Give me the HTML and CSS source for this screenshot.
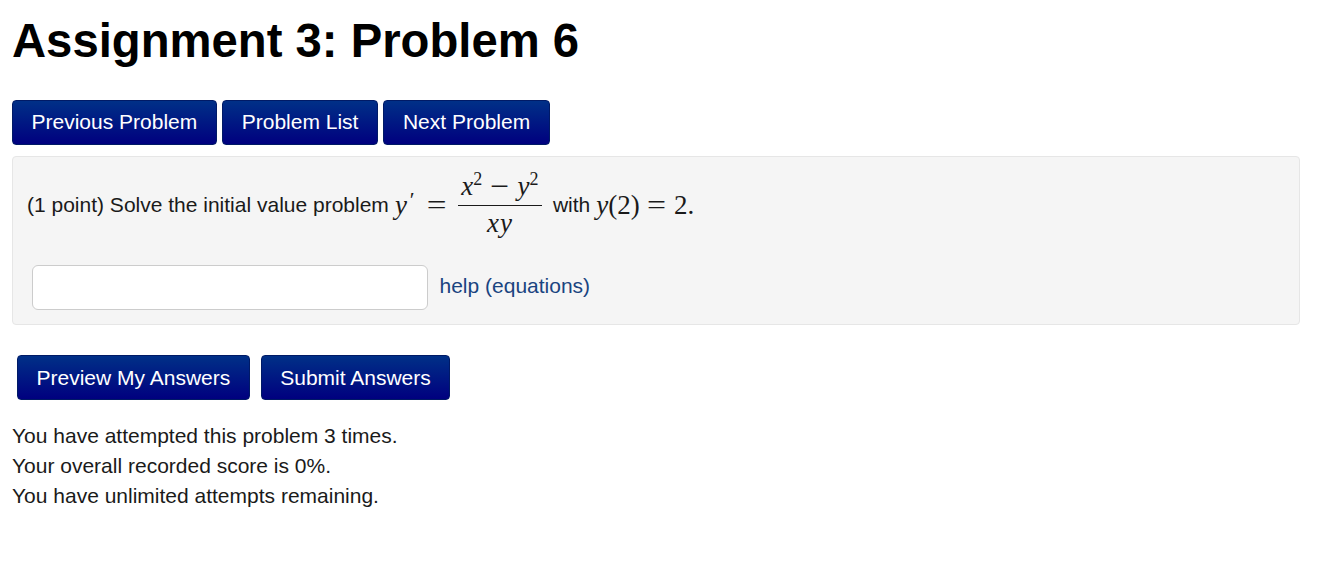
FILE: index.html
```html
<!DOCTYPE html>
<html lang="en">
<head>
<meta charset="utf-8">
<title>Assignment 3: Problem 6</title>
<link rel="stylesheet" href="styles.css">
</head>
<body>
<h1 class="title">Assignment 3: Problem 6</h1>
<nav class="nav">
  <a class="btn" href="#">Previous Problem</a>
  <a class="btn" href="#">Problem List</a>
  <a class="btn" href="#">Next Problem</a>
</nav>
<section class="panel">
  <div class="statement">
    <span>(1 point) Solve the initial value problem</span>
    <span class="math var">y</span><span class="math prime">&prime;</span>
    <span class="math eq">=</span>
    <span class="frac">
      <span class="num"><i>x</i><sup>2</sup><span class="minus">&minus;</span><i>y</i><sup>2</sup></span>
      <span class="den"><i>xy</i></span>
    </span>
    <span class="with">with</span>
    <span class="math expr"><i>y</i>(2)<span class="eq2">=</span>2.</span>
  </div>
  <div class="answer">
    <input class="input" type="text" aria-label="answer">
    <a class="help" href="#">help (equations)</a>
  </div>
</section>
<div class="actions">
  <button class="btn" type="button">Preview My Answers</button>
  <button class="btn" type="button">Submit Answers</button>
</div>
<div class="status">
  <p>You have attempted this problem 3 times.</p>
  <p>Your overall recorded score is 0%.</p>
  <p>You have unlimited attempts remaining.</p>
</div>
</body>
</html>
```
FILE: styles.css
```css
* { box-sizing: border-box; }
html, body { margin: 0; background: #fff; }
body {
  padding: 0 22px 0 12px;
  font-family: "Liberation Sans", Arial, sans-serif;
  font-size: 21px;
  line-height: 30px;
  color: #1a1a1a;
}
.title {
  margin: 0;
  padding-top: 15px;
  height: 100px;
  font-size: 47.25px;
  line-height: 52px;
  font-weight: 700;
  color: #000;
}
.nav { display: flex; gap: 5.5px; }
.btn {
  display: block;
  height: 45px;
  padding: 0 18.5px;
  border: 1px solid #001a66;
  border-radius: 4px;
  background: linear-gradient(#003087, #00007f);
  color: #fff;
  font: 21px/41px "Liberation Sans", Arial, sans-serif;
  text-decoration: none;
  white-space: nowrap;
}
.panel {
  margin-top: 11px;
  height: 169px;
  padding: 14px;
  background: #f5f5f5;
  border: 1px solid #e6e6e6;
  border-radius: 4px;
}
.statement {
  display: flex;
  align-items: center;
  height: 68px;
  white-space: nowrap;
}
.math { font-family: "Liberation Serif", serif; font-size: 27px; }
.var { font-style: italic; margin-left: 6px; }
.prime { margin-left: 3px; position: relative; top: -5px; font-size: 22px; }
.eq { margin-left: 14px; transform: scaleX(1.3); }
.frac {
  display: inline-flex;
  flex-direction: column;
  align-items: center;
  margin-left: 14px;
  width: 84px;
  font-family: "Liberation Serif", serif;
  font-size: 27px;
  line-height: 37px;
}
.num { display: block; width: 100%; height: 38px; border-bottom: 1.5px solid #1a1a1a; text-align: center; }
.den { display: block; height: 36px; line-height: 35px; letter-spacing: 1px; }
.num sup { font-size: 18px; line-height: 0; vertical-align: 10px; }
.minus { display: inline-block; margin: 0 10px; transform: scaleX(1.25); }
.with { margin-left: 11px; }
.expr { margin-left: 6px; }
.eq2 { display: inline-block; margin: 0 10px 0 9px; transform: scaleX(1.25); }
.answer {
  display: flex;
  align-items: center;
  gap: 11.5px;
  margin-top: 26px;
  padding-left: 5px;
}
.input {
  width: 396px;
  height: 45px;
  padding: 0 10px;
  background: #fff;
  border: 1px solid #ccc;
  border-radius: 6px;
}
.help { color: #1a4480; text-decoration: none; position: relative; top: -2px; }
.actions { display: flex; gap: 11px; margin-top: 30px; padding-left: 5px; }
.status { margin-top: 21px; }
.status p { margin: 0; }
```
